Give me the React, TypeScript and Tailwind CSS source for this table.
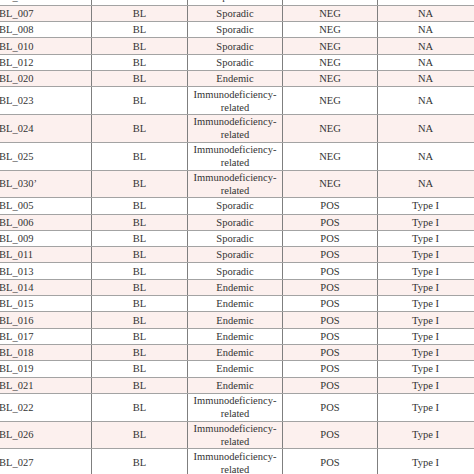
type Row = {
  id: string;
  type: string;
  subtype: string;
  ebv: string;
  latency: string;
  tall?: boolean;
};

const rows: Row[] = [
  { id: "BL_007", type: "BL", subtype: "Sporadic", ebv: "NEG", latency: "NA" },
  { id: "BL_008", type: "BL", subtype: "Sporadic", ebv: "NEG", latency: "NA" },
  { id: "BL_010", type: "BL", subtype: "Sporadic", ebv: "NEG", latency: "NA" },
  { id: "BL_012", type: "BL", subtype: "Sporadic", ebv: "NEG", latency: "NA" },
  { id: "BL_020", type: "BL", subtype: "Endemic", ebv: "NEG", latency: "NA" },
  { id: "BL_023", type: "BL", subtype: "Immunodeficiency-related", ebv: "NEG", latency: "NA", tall: true },
  { id: "BL_024", type: "BL", subtype: "Immunodeficiency-related", ebv: "NEG", latency: "NA", tall: true },
  { id: "BL_025", type: "BL", subtype: "Immunodeficiency-related", ebv: "NEG", latency: "NA", tall: true },
  { id: "BL_030\u02bc", type: "BL", subtype: "Immunodeficiency-related", ebv: "NEG", latency: "NA", tall: true },
  { id: "BL_005", type: "BL", subtype: "Sporadic", ebv: "POS", latency: "Type I" },
  { id: "BL_006", type: "BL", subtype: "Sporadic", ebv: "POS", latency: "Type I" },
  { id: "BL_009", type: "BL", subtype: "Sporadic", ebv: "POS", latency: "Type I" },
  { id: "BL_011", type: "BL", subtype: "Sporadic", ebv: "POS", latency: "Type I" },
  { id: "BL_013", type: "BL", subtype: "Sporadic", ebv: "POS", latency: "Type I" },
  { id: "BL_014", type: "BL", subtype: "Endemic", ebv: "POS", latency: "Type I" },
  { id: "BL_015", type: "BL", subtype: "Endemic", ebv: "POS", latency: "Type I" },
  { id: "BL_016", type: "BL", subtype: "Endemic", ebv: "POS", latency: "Type I" },
  { id: "BL_017", type: "BL", subtype: "Endemic", ebv: "POS", latency: "Type I" },
  { id: "BL_018", type: "BL", subtype: "Endemic", ebv: "POS", latency: "Type I" },
  { id: "BL_019", type: "BL", subtype: "Endemic", ebv: "POS", latency: "Type I" },
  { id: "BL_021", type: "BL", subtype: "Endemic", ebv: "POS", latency: "Type I" },
  { id: "BL_022", type: "BL", subtype: "Immunodeficiency-related", ebv: "POS", latency: "Type I", tall: true },
  { id: "BL_026", type: "BL", subtype: "Immunodeficiency-related", ebv: "POS", latency: "Type I", tall: true },
  { id: "BL_027", type: "BL", subtype: "Immunodeficiency-related", ebv: "POS", latency: "Type I", tall: true },
];

const Subtype = ({ text }: { text: string }) => {
  if (text === "Immunodeficiency-related") {
    return (
      <span className="block text-center leading-[13px]">
        Immunodeficiency-
        <br />
        related
      </span>
    );
  }
  return <span>{text}</span>;
};

const TableRow = ({ row, shaded }: { row: Row; shaded: boolean }) => (
  <div
    className={`flex border-t-[1.5px] border-[#a3a3a3] ${
      row.tall ? "h-[27.75px]" : "h-[16.3px]"
    } ${shaded ? "bg-[#fcf0ee]" : "bg-white"}`}
  >
    <div className="w-[92px] flex items-center -ml-[1px]">{row.id}</div>
    <div className="w-[96px] flex items-center justify-center border-l border-[#7f7f7f]">
      {row.type}
    </div>
    <div className="w-[95px] flex items-center justify-center border-l border-[#7f7f7f]">
      <Subtype text={row.subtype} />
    </div>
    <div className="w-[95px] flex items-center justify-center border-l border-[#7f7f7f]">
      {row.ebv}
    </div>
    <div className="w-[96px] flex items-center justify-center border-l border-[#7f7f7f]">
      {row.latency}
    </div>
  </div>
);

export default function App() {
  return (
    <div
      className="w-[474px] h-[474px] overflow-hidden bg-white text-[#333] text-[10.5px] leading-[13px]"
      style={{ fontFamily: '"Liberation Serif", "Times New Roman", serif' }}
    >
      <div className="-mt-[11.5px]">
        {/* partially visible row above the crop */}
        <div className="flex h-[16.3px] bg-white">
          <div className="w-[92px] flex items-center -ml-[1px]">BL_004</div>
          <div className="w-[96px] flex items-center justify-center border-l border-[#7f7f7f]">BL</div>
          <div className="w-[95px] flex items-center justify-center border-l border-[#7f7f7f]">Sporadic</div>
          <div className="w-[95px] flex items-center justify-center border-l border-[#7f7f7f]">NEG</div>
          <div className="w-[96px] flex items-center justify-center border-l border-[#7f7f7f]">NA</div>
        </div>
        {rows.map((row, i) => (
          <TableRow key={row.id} row={row} shaded={i % 2 === 0} />
        ))}
      </div>
    </div>
  );
}
